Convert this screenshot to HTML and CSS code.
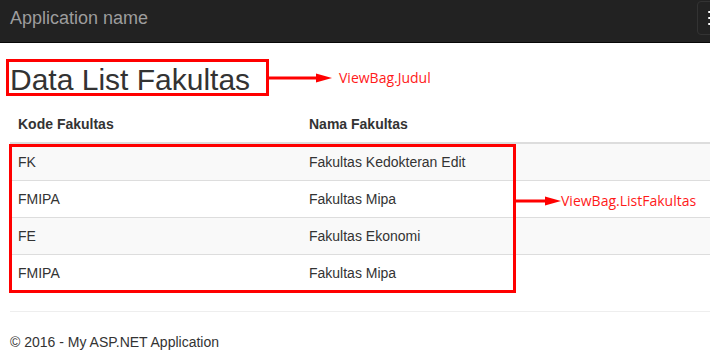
FILE: index.html
```html
<!DOCTYPE html>
<html lang="id">
<head>
<meta charset="utf-8">
<title>Data List Fakultas</title>
<link rel="stylesheet" href="styles.css">
</head>
<body>
<header class="navbar">
  <span class="brand">Application name</span>
  <button class="toggle" type="button" aria-label="Toggle navigation">
    <span class="bar"></span>
    <span class="bar"></span>
    <span class="bar"></span>
  </button>
</header>
<main class="content">
  <h2 class="title">Data List Fakultas</h2>
  <table class="grid">
    <thead>
      <tr><th class="col-kode">Kode Fakultas</th><th>Nama Fakultas</th></tr>
    </thead>
    <tbody>
      <tr class="striped"><td>FK</td><td>Fakultas Kedokteran Edit</td></tr>
      <tr><td>FMIPA</td><td>Fakultas Mipa</td></tr>
      <tr class="striped"><td>FE</td><td>Fakultas Ekonomi</td></tr>
      <tr><td>FMIPA</td><td>Fakultas Mipa</td></tr>
    </tbody>
  </table>
  <hr class="rule">
  <footer class="footer"><p>© 2016 - My ASP.NET Application</p></footer>

  <div class="mark mark-title"></div>
  <svg class="arrow arrow-title" width="64" height="10" viewBox="0 0 64 10"><rect x="0" y="3.5" width="50" height="3" fill="#ff0000"/><polygon points="48,0.5 64,5 48,9.5" fill="#ff0000"/></svg>
  <span class="note note-title">ViewBag.Judul</span>

  <div class="mark mark-list"></div>
  <svg class="arrow arrow-list" width="46" height="10" viewBox="0 0 46 10"><rect x="0" y="3.5" width="32" height="3" fill="#ff0000"/><polygon points="30,0.5 46,5 30,9.5" fill="#ff0000"/></svg>
  <span class="note note-list">ViewBag.ListFakultas</span>
</main>
</body>
</html>
```

FILE: styles.css
```css
html, body {
  margin: 0;
  padding: 0;
  overflow: hidden;
  background: #fff;
}
body {
  font-family: "Liberation Sans", Arial, Helvetica, sans-serif;
  font-size: 14px;
  line-height: 20px;
  color: #333;
  width: 710px;
  height: 364px;
}
.navbar {
  display: flex;
  align-items: flex-start;
  height: 42px;
  background: #222;
  border-bottom: 1px solid #080808;
}
.brand {
  padding-left: 10px;
  margin-top: 8px;
  font-size: 18px;
  line-height: 20px;
  color: #9d9d9d;
}
.toggle {
  margin-left: auto;
  margin-right: -31px;
  margin-top: 1px;
  flex: none;
  display: flex;
  flex-direction: column;
  gap: 4px;
  padding: 9px 10px;
  background: transparent;
  border: 1px solid #333;
  border-radius: 4px;
}
.bar {
  display: block;
  width: 22px;
  height: 2px;
  background: #fff;
  border-radius: 1px;
}
.content {
  position: relative;
  display: flow-root;
  padding-left: 10px;
}
.title {
  margin: 20px 0 10px;
  font-size: 30px;
  line-height: 33px;
  font-weight: 500;
  color: #333;
}
.grid {
  width: 731px;
  border-collapse: collapse;
  border-spacing: 0;
  margin-bottom: 20px;
}
.grid th, .grid td {
  padding: 8px;
  text-align: left;
  vertical-align: top;
  line-height: 20px;
}
.grid th {
  font-weight: bold;
  border-bottom: 2px solid #ddd;
}
.grid td {
  border-top: 1px solid #ddd;
}
.grid tbody tr:first-child td {
  border-top: 0;
}
.col-kode {
  width: 275px;
}
.striped {
  background: #f9f9f9;
}
.rule {
  margin: 20px 0;
  border: 0;
  border-top: 1px solid #eee;
  width: 731px;
}
.footer p {
  margin: 0 0 10px;
}
.mark {
  position: absolute;
  border: 3px solid #ff0000;
  box-sizing: border-box;
}
.mark-title {
  left: 6px;
  top: 16px;
  width: 263px;
  height: 37px;
}
.mark-list {
  left: 9px;
  top: 101px;
  width: 507px;
  height: 149px;
}
.arrow {
  position: absolute;
  display: block;
}
.arrow-title {
  left: 268px;
  top: 30px;
}
.arrow-list {
  left: 515px;
  top: 153px;
}
.note {
  position: absolute;
  font-family: "Open Sans", "DejaVu Sans", sans-serif;
  font-size: 14px;
  line-height: 16px;
  color: #ff1a1a;
  white-space: nowrap;
}
.note-title {
  left: 339px;
  top: 27px;
}
.note-list {
  left: 561px;
  top: 150px;
}
```
